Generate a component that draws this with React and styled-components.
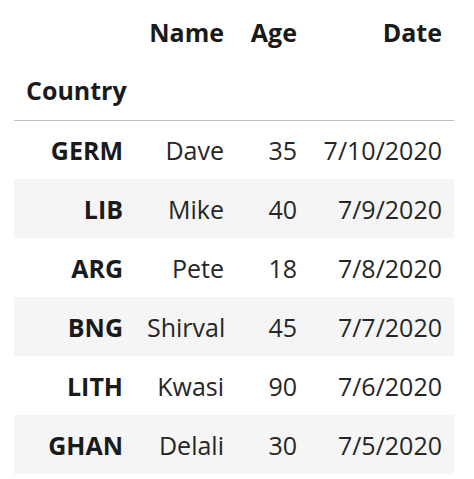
import React from "react";
import styled, { createGlobalStyle } from "styled-components";

const Global = createGlobalStyle`
  html, body { margin: 0; padding: 0; background: #fff; }
  body { font-family: "Open Sans", "Noto Sans", sans-serif; }
`;

const Wrap = styled.div`
  padding: 2px 0 0 14px;
`;

const Table = styled.table`
  border-collapse: collapse;
  border-spacing: 0;
  table-layout: fixed;
  width: 440px;
  font-size: 25px;
  color: #262626;
`;

const Th = styled.th`
  height: 59px;
  padding: 0 12px;
  box-sizing: border-box;
  text-align: ${(p) => p.$align || "right"};
  font-weight: 700;
  color: #1a1a1a;
  white-space: nowrap;
  vertical-align: middle;
`;

const HeadRow = styled.tr`
  border-bottom: ${(p) => (p.$rule ? "1px solid #bdbdbd" : "none")};
`;

const Row = styled.tr`
  background: ${(p) => (p.$shaded ? "#f5f5f5" : "#fff")};
`;

const Td = styled.td`
  height: 59px;
  padding: 0 12px;
  box-sizing: border-box;
  text-align: right;
  font-weight: 400;
  white-space: nowrap;
  vertical-align: middle;
`;

const rows = [
  ["GERM", "Dave", 35, "7/10/2020"],
  ["LIB", "Mike", 40, "7/9/2020"],
  ["ARG", "Pete", 18, "7/8/2020"],
  ["BNG", "Shirval", 45, "7/7/2020"],
  ["LITH", "Kwasi", 90, "7/6/2020"],
  ["GHAN", "Delali", 30, "7/5/2020"],
];

export default function App() {
  return (
    <>
      <Global />
      <Wrap>
        <Table>
          <colgroup>
            <col style={{ width: 121 }} />
            <col style={{ width: 101 }} />
            <col style={{ width: 73 }} />
            <col style={{ width: 145 }} />
          </colgroup>
          <thead>
            <HeadRow>
              <Th />
              <Th>Name</Th>
              <Th>Age</Th>
              <Th>Date</Th>
            </HeadRow>
            <HeadRow $rule>
              <Th $align="left">Country</Th>
              <Th />
              <Th />
              <Th />
            </HeadRow>
          </thead>
          <tbody>
            {rows.map((r, i) => (
              <Row key={r[0]} $shaded={i % 2 === 1}>
                <Th scope="row">{r[0]}</Th>
                <Td>{r[1]}</Td>
                <Td>{r[2]}</Td>
                <Td>{r[3]}</Td>
              </Row>
            ))}
          </tbody>
        </Table>
      </Wrap>
    </>
  );
}
